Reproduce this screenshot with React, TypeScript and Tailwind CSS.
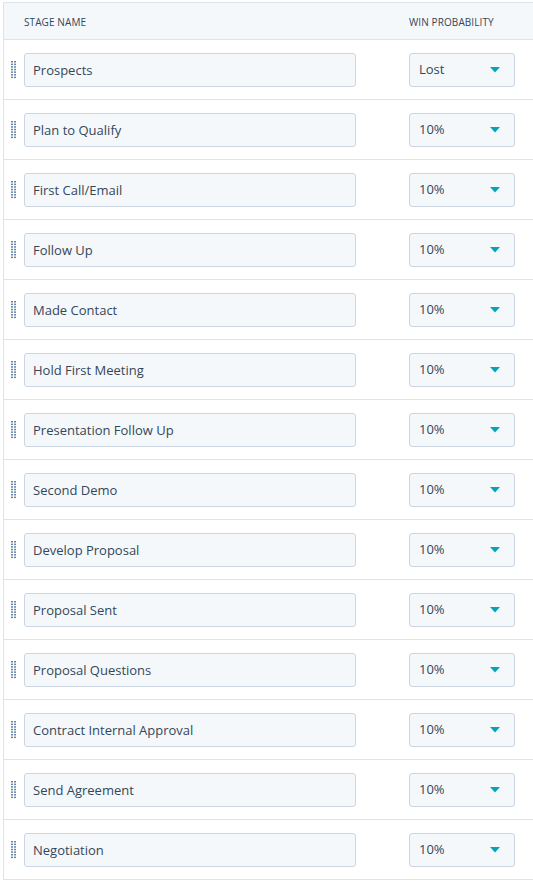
import { useState } from "react";

const stages = [
  { name: "Prospects", prob: "Lost" },
  { name: "Plan to Qualify", prob: "10%" },
  { name: "First Call/Email", prob: "10%" },
  { name: "Follow Up", prob: "10%" },
  { name: "Made Contact", prob: "10%" },
  { name: "Hold First Meeting", prob: "10%" },
  { name: "Presentation Follow Up", prob: "10%" },
  { name: "Second Demo", prob: "10%" },
  { name: "Develop Proposal", prob: "10%" },
  { name: "Proposal Sent", prob: "10%" },
  { name: "Proposal Questions", prob: "10%" },
  { name: "Contract Internal Approval", prob: "10%" },
  { name: "Send Agreement", prob: "10%" },
  { name: "Negotiation", prob: "10%" },
];

function DragHandle() {
  return (
    <svg width="5" height="18" viewBox="0 0 5 18" className="shrink-0">
      {[0, 1, 2, 3, 4, 5, 6].map((i) => (
        <g key={i} fill="#6a84a3">
          <rect x="0" y={i * 2.6} width="2" height="1.5" />
          <rect x="3" y={i * 2.6} width="2" height="1.5" />
        </g>
      ))}
    </svg>
  );
}

function StageRow({ name, prob }: { name: string; prob: string }) {
  const [value, setValue] = useState(name);
  return (
    <div className="flex h-[60px] items-center border-b border-[#dfe3eb]">
      <div className="flex w-[20px] justify-start pl-[7px] pt-[1px]">
        <DragHandle />
      </div>
      <input
        value={value}
        onChange={(e) => setValue(e.target.value)}
        className="h-[34px] w-[332px] rounded-[3px] border border-[#cbd6e2] bg-[#f5f8fa] px-[8px] pt-[1px] text-[13px] text-[#33475b] outline-none"
      />
      <button className="ml-[53px] flex h-[34px] w-[106px] items-center justify-between rounded-[3px] border border-[#cbd6e2] bg-[#f5f8fa] pl-[9px] pr-[14px] pt-[1px] text-[13px] text-[#33475b]">
        <span>{prob}</span>
        <svg width="10" height="6" viewBox="0 0 10 6">
          <path d="M0 0h10L5 5.5z" fill="#00a4bd" />
        </svg>
      </button>
    </div>
  );
}

export default function App() {
  return (
    <div className="min-h-[885px] bg-white pl-[3px] pt-[2px] font-['Open_Sans','Lato',sans-serif]">
      <div className="border-l border-t border-[#dfe3eb]">
        <div className="flex h-[37px] items-center border-b border-[#dfe3eb] bg-[#f5f8fa] pt-[3px] text-[10px] uppercase tracking-[0.1px] text-[#33475b]">
          <span className="ml-[20px] w-[385px]">Stage Name</span>
          <span>Win Probability</span>
        </div>
        {stages.map((s) => (
          <StageRow key={s.name} name={s.name} prob={s.prob} />
        ))}
      </div>
    </div>
  );
}
